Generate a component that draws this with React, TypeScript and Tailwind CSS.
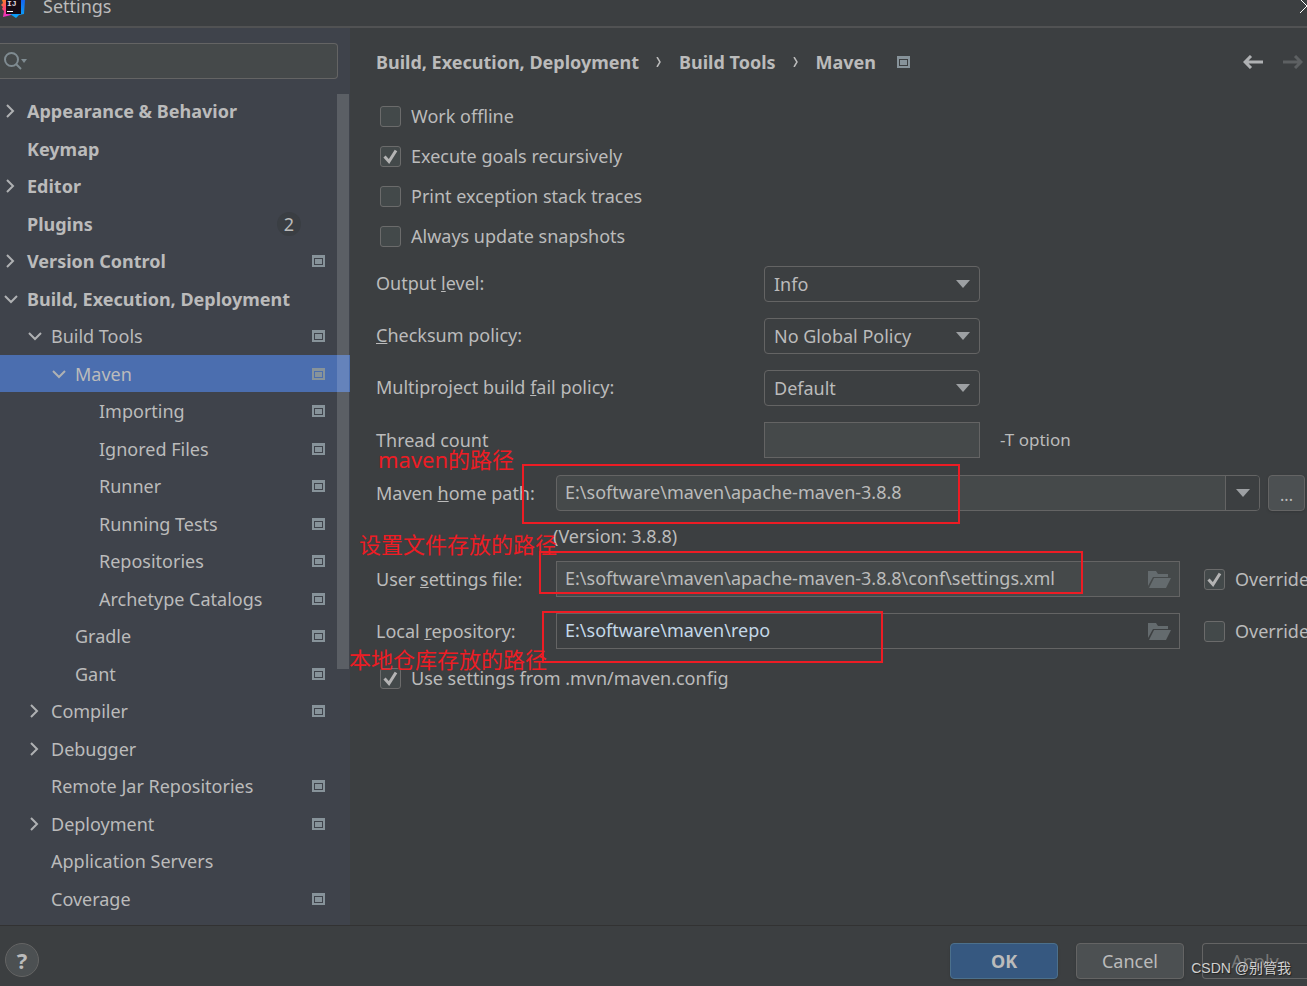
import { useState } from "react";
import type { ReactNode } from "react";
import clsx from "clsx";

type TreeItem = {
  label: string;
  depth: 0 | 1 | 2 | 3;
  arrow?: "open" | "closed";
  project?: boolean;
  count?: number;
};

const TREE: TreeItem[] = [
  { label: "Appearance & Behavior", depth: 0, arrow: "closed" },
  { label: "Keymap", depth: 0 },
  { label: "Editor", depth: 0, arrow: "closed" },
  { label: "Plugins", depth: 0, count: 2 },
  { label: "Version Control", depth: 0, arrow: "closed", project: true },
  { label: "Build, Execution, Deployment", depth: 0, arrow: "open" },
  { label: "Build Tools", depth: 1, arrow: "open", project: true },
  { label: "Maven", depth: 2, arrow: "open", project: true },
  { label: "Importing", depth: 3, project: true },
  { label: "Ignored Files", depth: 3, project: true },
  { label: "Runner", depth: 3, project: true },
  { label: "Running Tests", depth: 3, project: true },
  { label: "Repositories", depth: 3, project: true },
  { label: "Archetype Catalogs", depth: 3, project: true },
  { label: "Gradle", depth: 2, project: true },
  { label: "Gant", depth: 2, project: true },
  { label: "Compiler", depth: 1, arrow: "closed", project: true },
  { label: "Debugger", depth: 1, arrow: "closed" },
  { label: "Remote Jar Repositories", depth: 1, project: true },
  { label: "Deployment", depth: 1, arrow: "closed", project: true },
  { label: "Application Servers", depth: 1 },
  { label: "Coverage", depth: 1, project: true },
];

const INDENT = ["pl-0", "pl-6", "pl-12", "pl-[72px]"];

function IdeaLogo() {
  return (
    <svg width="25" height="18" viewBox="0 0 25 18" className="shrink-0" aria-hidden="true">
      <defs>
        <linearGradient id="idea-left" x1="0" y1="0" x2="0.4" y2="1">
          <stop offset="0" stopColor="#fc8a1e" />
          <stop offset="0.5" stopColor="#fd4a6a" />
          <stop offset="1" stopColor="#e92fc8" />
        </linearGradient>
        <linearGradient id="idea-right" x1="0" y1="0" x2="0" y2="1">
          <stop offset="0" stopColor="#1565f0" />
          <stop offset="1" stopColor="#08a8fb" />
        </linearGradient>
      </defs>
      <path d="M2 0h9v15l-8 2 1-6-2-2 1-2-2-2 2-2z" fill="url(#idea-left)" />
      <path d="M18 0h7l-1 14-5 1-3 3-6-4 8-1z" fill="url(#idea-right)" />
      <path d="M6 0h15v14H6z" fill="#160b16" />
      <text x="7" y="6" fontSize="8" fontWeight="bold" fill="#e0dce0" className="font-['Liberation_Mono',monospace]">IJ</text>
      <path d="M7 11h6v1H7z" fill="#fff" />
    </svg>
  );
}

function ProjectIcon({ className }: { className?: string }) {
  return (
    <svg width="13" height="12" viewBox="0 0 13 12" className={clsx("shrink-0 fill-[#87939a]", className)} aria-hidden="true">
      <path fillRule="evenodd" d="M0 0h13v12H0zM2 3v7h9V3z" />
      <path d="M3 4h7v5H3z" />
    </svg>
  );
}

function Chevron({ open }: { open: boolean }) {
  return (
    <svg width="14" height="14" viewBox="0 0 14 14" fill="none" stroke="#afb1b3" strokeWidth="2" aria-hidden="true">
      <path d={open ? "M1 4l6 6 6-6" : "M3 1l6 6-6 6"} />
    </svg>
  );
}

function DownTriangle({ className }: { className?: string }) {
  return (
    <svg width="14" height="8" viewBox="0 0 14 8" className={clsx("pointer-events-none fill-[#9da0a3]", className)} aria-hidden="true">
      <path d="M0 0h14L7 8z" />
    </svg>
  );
}

function FolderIcon() {
  return (
    <svg width="23" height="17" viewBox="0 0 23 17" className="pointer-events-none col-start-1 row-start-1 mr-[9px] justify-self-end self-center fill-[#646b6e]" aria-hidden="true">
      <path d="M0 0h8l2 3h10v3H5L0 15z" />
      <path d="M6 7h17l-5 10H1z" />
    </svg>
  );
}

function BreadcrumbArrow() {
  return (
    <svg width="6" height="10" viewBox="0 0 6 10" fill="none" stroke="#bbbbbb" strokeWidth="1.500" aria-hidden="true">
      <path d="M1 0l3 5-3 5" />
    </svg>
  );
}

function Checkbox({ label, defaultChecked }: { label: string; defaultChecked?: boolean }) {
  return (
    <label className="flex items-center gap-[10px] whitespace-nowrap">
      <span className="grid shrink-0">
        <input
          type="checkbox"
          defaultChecked={defaultChecked}
          className="peer col-start-1 row-start-1 size-[21px] appearance-none rounded-[3px] border border-[#6b6b6b] bg-[#43494a]"
        />
        <svg width="21" height="21" viewBox="0 0 21 21" fill="none" stroke="#b4b4b4" strokeWidth="3" className="pointer-events-none invisible col-start-1 row-start-1 peer-checked:visible" aria-hidden="true">
          <path d="M4.500 10.500l4.500 5L16 4.500" />
        </svg>
      </span>
      {label}
    </label>
  );
}

function SelectRow({ id, label, value }: { id: string; label: ReactNode; value: string }) {
  return (
    <div className="flex h-9 items-center">
      <label htmlFor={id} className="w-[388px] shrink-0 pb-0.5">{label}</label>
      <span className="grid w-[216px] items-center">
        <select id={id} defaultValue={value} className="col-start-1 row-start-1 h-9 w-full appearance-none rounded border border-[#646464] bg-[#3c3f41] px-[9px]">
          <option>{value}</option>
        </select>
        <DownTriangle className="col-start-1 row-start-1 mr-[10px] justify-self-end" />
      </span>
    </div>
  );
}

function PathRow({ id, label, value, override }: { id: string; label: ReactNode; value: string; override: boolean }) {
  return (
    <div className="flex h-9 items-center">
      <label htmlFor={id} className="w-[180px] shrink-0">{label}</label>
      <span className="grid flex-1">
        <input
          id={id}
          defaultValue={value}
          className={clsx(
            "col-start-1 row-start-1 h-9 w-full border border-[#646464] px-2 pb-0.5",
            override ? "bg-[#45494a]" : "bg-[#3c3f41] text-[#c4d8e8]"
          )}
        />
        <FolderIcon />
      </span>
      <div className="ml-6 w-[103px] overflow-hidden">
        <Checkbox label="Override" defaultChecked={override} />
      </div>
    </div>
  );
}

function Sidebar() {
  const [selected, setSelected] = useState("Maven");

  return (
    <aside className="relative w-[350px] shrink-0 bg-[#3f434b] pt-[15px] pb-2">
      <label className="mr-3 flex h-9 items-center gap-px rounded-r border border-l-0 border-[#646464] bg-[#45494a] pl-1">
        <svg width="18" height="18" viewBox="0 0 18 18" fill="none" stroke="#7f8b91" strokeWidth="2" aria-hidden="true">
          <circle cx="7.500" cy="7.500" r="6.500" />
          <path d="M12 12l5 5" />
        </svg>
        <svg width="6" height="4" viewBox="0 0 6 4" className="-ml-0.5 fill-[#7f8b91]" aria-hidden="true">
          <path d="M0 0h6L3 4z" />
        </svg>
        <input type="text" aria-label="Search settings" className="min-w-0 flex-1 outline-none" />
      </label>

      <ul className="mt-[13px]">
        {TREE.map((item) => (
          <li key={item.label} className="odd:h-[38px] even:h-[37px]">
            <button
              type="button"
              onClick={() => setSelected(item.label)}
              className={clsx(
                "flex h-full w-full items-center pr-[25px] text-left",
                INDENT[item.depth],
                item.depth === 0 && "font-bold",
                selected === item.label && "bg-[#4b6eaf]"
              )}
            >
              <span className="mr-1.5 flex w-[21px] shrink-0 justify-center">
                {item.arrow && <Chevron open={item.arrow === "open"} />}
              </span>
              <span className="flex-1 whitespace-nowrap">{item.label}</span>
              {item.count && (
                <span className="mr-6 flex size-6 items-center justify-center rounded-full bg-[#3a3e43] font-normal">
                  {item.count}
                </span>
              )}
              {item.project && <ProjectIcon />}
            </button>
          </li>
        ))}
      </ul>

      <div className="absolute top-[66px] right-px h-[575px] w-3 bg-white/15" />
    </aside>
  );
}

function Breadcrumb() {
  return (
    <header className="flex h-[68px] items-center">
      <nav className="flex items-center gap-[17px] whitespace-nowrap font-bold">
        <a href="#build">Build, Execution, Deployment</a>
        <BreadcrumbArrow />
        <a href="#build-tools">Build Tools</a>
        <BreadcrumbArrow />
        <a href="#maven">Maven</a>
      </nav>
      <ProjectIcon className="ml-[21px]" />
      <div className="ml-auto flex gap-5 pr-1">
        <button type="button" aria-label="Back">
          <svg width="20" height="14" viewBox="0 0 20 14" fill="none" stroke="#afb1b3" strokeWidth="3" aria-hidden="true"><path d="M20 7H2M8 1L2 7l6 6" /></svg>
        </button>
        <button type="button" aria-label="Forward" disabled>
          <svg width="20" height="14" viewBox="0 0 20 14" fill="none" stroke="#5d6062" strokeWidth="3" aria-hidden="true"><path d="M0 7h18M12 1l6 6-6 6" /></svg>
        </button>
      </div>
    </header>
  );
}

function MavenSettings() {
  return (
    <form className="flex flex-col">
      <div className="flex flex-col [&>label]:h-10 [&>label]:pl-1">
        <Checkbox label="Work offline" />
        <Checkbox label="Execute goals recursively" defaultChecked />
        <Checkbox label="Print exception stack traces" />
        <Checkbox label="Always update snapshots" />
      </div>

      <div className="mt-[10px] flex flex-col gap-4">
        <SelectRow id="output" label={<>Output <u>l</u>evel:</>} value="Info" />
        <SelectRow id="checksum" label={<><u>C</u>hecksum policy:</>} value="No Global Policy" />
        <SelectRow id="fail" label={<>Multiproject build <u>f</u>ail policy:</>} value="Default" />
        <div className="flex h-9 items-center">
          <label htmlFor="threads" className="w-[388px] shrink-0">Thread count</label>
          <input id="threads" className="h-9 w-[216px] border border-[#646464] bg-[#45494a] px-2" />
          <span className="ml-5 text-[17px]">-T option</span>
        </div>
      </div>

      <div className="mt-[17px] flex h-9 items-center pr-0.5">
        <label htmlFor="home" className="w-[180px] shrink-0">Maven <u>h</u>ome path:</label>
        <span className="flex h-9 flex-1 overflow-hidden rounded border border-[#646464] bg-[#45494a]">
          <input id="home" defaultValue="E:\software\maven\apache-maven-3.8.8" className="min-w-0 flex-1 px-2 pb-0.5" />
          <button type="button" aria-label="Show paths" className="flex w-[34px] items-center justify-center border-l border-[#646464] bg-[#3c3f41]">
            <DownTriangle />
          </button>
        </span>
        <button type="button" aria-label="Browse" className="ml-2 h-9 w-[37px] rounded border border-[#646464] bg-[#4c5052] pt-1 text-base shadow-sm">
          ...
        </button>
      </div>
      <p className="flex h-[50px] items-center pl-[177px]">(Version: 3.8.8)</p>
      <div className="flex flex-col gap-4">
        <PathRow id="settings" label={<>User <u>s</u>ettings file:</>} value="E:\software\maven\apache-maven-3.8.8\conf\settings.xml" override />
        <PathRow id="repo" label={<>Local <u>r</u>epository:</>} value="E:\software\maven\repo" override={false} />
      </div>
      <div className="mt-[9px] [&>label]:h-10 [&>label]:pl-1">
        <Checkbox label="Use settings from .mvn/maven.config" defaultChecked />
      </div>
    </form>
  );
}

// Red mark-up drawn over the form
function Annotations() {
  return (
    <div className="pointer-events-none absolute inset-0 whitespace-nowrap text-[22px] leading-8 text-[#ed1c24]">
      <span className="absolute top-[415px] left-[28px]">maven的路径</span>
      <div className="absolute top-[436px] left-[172px] h-[60px] w-[438px] border-2 border-[#ed1c24]" />
      <span className="absolute top-[500px] left-[9px]">设置文件存放的路径</span>
      <div className="absolute top-[523px] left-[189px] h-[43px] w-[544px] border-2 border-[#ed1c24]" />
      <div className="absolute top-[583px] left-[192px] h-[52px] w-[341px] border-2 border-[#ed1c24]" />
      <span className="absolute top-[615px] -left-px">本地仓库存放的路径</span>
    </div>
  );
}

export default function App() {
  return (
    <div className="relative flex min-h-screen flex-col overflow-hidden bg-[#3c3f41] font-['Noto_Sans','Noto_Sans_CJK_SC',sans-serif] text-[18px] leading-6 text-[#bbbbbb]">
      <header className="flex h-7 shrink-0 items-start justify-between border-b-2 border-[#515253]">
        <div className="flex items-start gap-[18px]">
          <IdeaLogo />
          <h1 className="-mt-1.5">Settings</h1>
        </div>
        <button type="button" aria-label="Close">
          <svg width="7" height="13" viewBox="0 0 7 13" fill="none" stroke="#ffffff" strokeWidth="1" aria-hidden="true">
            <path d="M1 0l6 6M0 13l7-7" />
          </svg>
        </button>
      </header>

      <div className="flex flex-1">
        <Sidebar />
        <main className="relative min-w-0 flex-1 pl-[26px]">
          <Breadcrumb />
          <MavenSettings />
          <Annotations />
        </main>
      </div>

      <footer className="flex h-[61px] shrink-0 items-start gap-[18px] border-t border-[#323232] pt-[17px]">
        <button type="button" aria-label="Help" className="mr-auto ml-[5px] size-[34px] rounded-full border border-[#646464] bg-[#4c5052] text-[22px] leading-none font-bold">
          ?
        </button>
        <button type="button" className="h-9 w-[108px] rounded border border-[#4c708c] bg-[#365880] font-bold shadow-sm">OK</button>
        <button type="button" className="h-9 w-[108px] rounded border border-[#646464] bg-[#4c5052] shadow-sm">Cancel</button>
        <button type="button" disabled className="h-9 w-[105px] rounded-l border border-r-0 border-[#646464] text-[#777777]">Apply</button>
      </footer>

      <span className="absolute right-4 bottom-1.5 font-['Liberation_Sans','Noto_Sans_CJK_SC',sans-serif] text-[14px] text-[#d0d0d0] [text-shadow:1px_1px_1px_#222]">
        CSDN @别管我
      </span>
    </div>
  );
}
